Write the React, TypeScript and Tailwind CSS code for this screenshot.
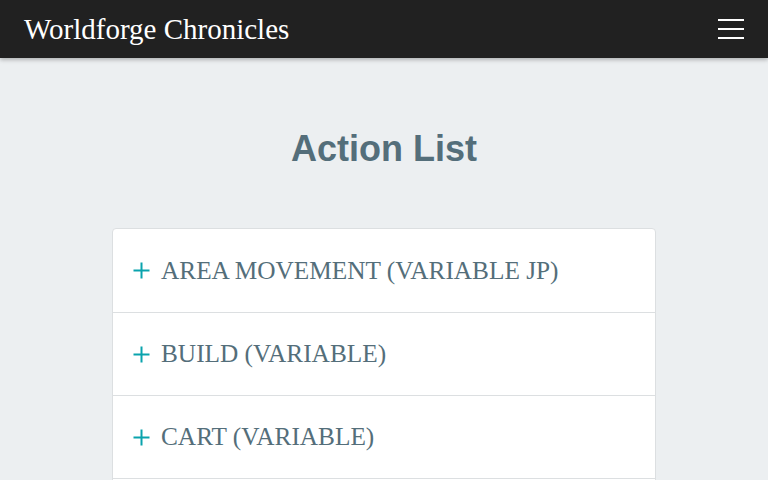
const actions = ['Area Movement (Variable JP)', 'Build (Variable)', 'Cart (Variable)', 'Chop (Variable)']

function PlusIcon() {
  return (
    <svg width="17" height="17" viewBox="0 0 17 17" className="shrink-0">
      <path d="M8.5 0.5v16M0.5 8.5h16" stroke="#0aa3ad" strokeWidth="2" />
    </svg>
  )
}

export default function App() {
  return (
    <div className="min-h-screen bg-[#eceff1] font-['Liberation_Sans',sans-serif]">
      <header className="h-[58px] bg-[#212121] flex items-center justify-between pl-6 pr-6 shadow-[0_2px_4px_rgba(0,0,0,0.25)]">
        <span className="text-white text-[29px] font-['Liberation_Serif',serif] leading-none">Worldforge Chronicles</span>
        <button className="flex flex-col gap-[7px] w-[26px]">
          <span className="block h-[2px] bg-white" />
          <span className="block h-[2px] bg-white" />
          <span className="block h-[2px] bg-white" />
        </button>
      </header>

      <main className="px-[112px]">
        <h1 className="text-center text-[36px] font-bold text-[#546e7a] pt-[68px] pb-[56px] leading-[46px]">Action List</h1>
        <div className="bg-white border border-[#dcdfe1] rounded-t-[4px]">
          {actions.map((a, i) => (
            <div
              key={a}
              className={`h-[83px] flex items-center pl-5 gap-[11px] ${i > 0 ? 'border-t border-[#dcdfe1]' : ''}`}
            >
              <PlusIcon />
              <span className="uppercase text-[25.3px] text-[#546e7a] font-['Liberation_Serif',serif]">{a}</span>
            </div>
          ))}
        </div>
      </main>
    </div>
  )
}
